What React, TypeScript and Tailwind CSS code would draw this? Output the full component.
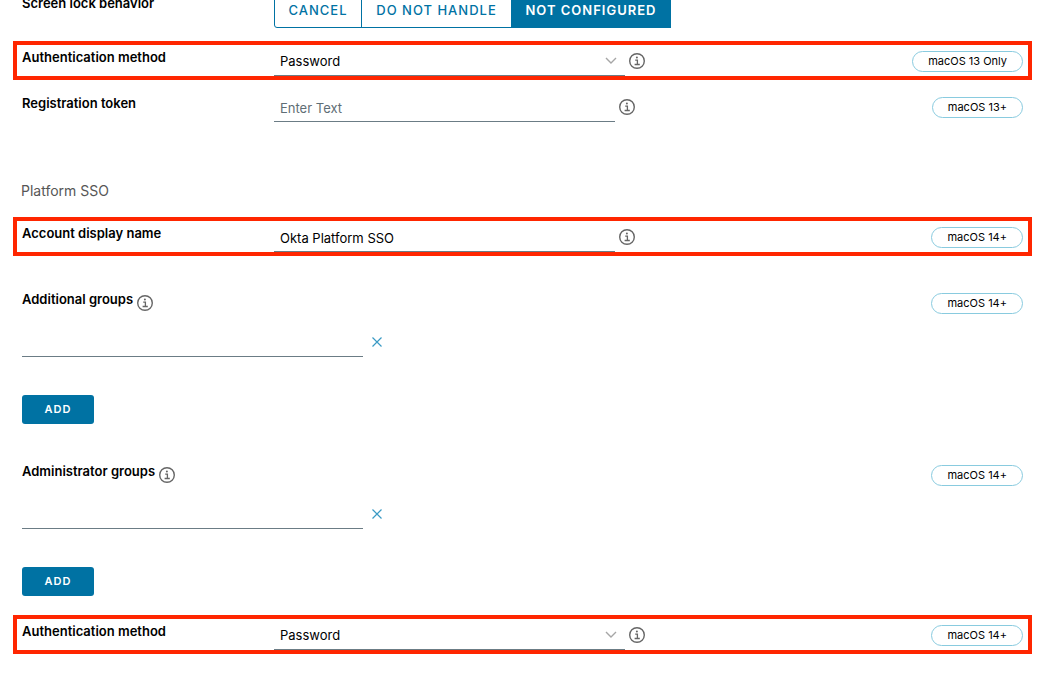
import React, { useState } from 'react';

const InfoIcon: React.FC = () => (
  <svg
    className="w-4 h-4 mt-2 ml-1 shrink-0 text-[#666666]"
    viewBox="0 0 16 16"
    fill="none"
    stroke="currentColor"
    aria-hidden="true"
  >
    <circle cx="8" cy="8" r="7.3" strokeWidth="1.4" />
    <circle cx="7.9" cy="4.6" r="1" fill="currentColor" stroke="none" />
    <path d="M6.2 7.1H8.4V11.4M5.6 11.5H10.8" strokeWidth="1.3" />
  </svg>
);

const Badge: React.FC<{ children: React.ReactNode }> = ({ children }) => (
  <span className="ml-auto mt-[6px] h-[21px] shrink-0 px-[15px] flex items-center rounded-full border border-[#89cbdf] text-[11px] whitespace-nowrap">
    {children}
  </span>
);

interface RowProps {
  label: string;
  htmlFor: string;
  badge: string;
  highlight?: boolean;
  children: React.ReactNode;
}

const Row: React.FC<RowProps> = ({ label, htmlFor, badge, highlight, children }) => (
  <div
    className={`flex items-start border-4 px-[5px] ${
      highlight ? 'border-[#ff2600]' : 'border-transparent'
    }`}
  >
    <label htmlFor={htmlFor} className="w-[252px] shrink-0 pt-1 text-[13px] leading-4 font-semibold">
      {label}
    </label>
    {children}
    <Badge>{badge}</Badge>
  </div>
);

const SelectField: React.FC<{ id: string }> = ({ id }) => (
  <>
    <div className="relative w-[351px]">
      <select
        id={id}
        className="block w-full h-[31px] pt-[3px] pl-[6px] pr-6 appearance-none bg-transparent border-b border-[#6b7c85] text-[13px] outline-none"
      >
        <option>Password</option>
      </select>
      <svg
        className="absolute right-2 top-3 w-3 h-[7px] text-[#a6a6a6] pointer-events-none"
        viewBox="0 0 12 7"
        fill="none"
        stroke="currentColor"
      >
        <path d="M1 1L6 6L11 1" strokeWidth="1.4" />
      </svg>
    </div>
    <InfoIcon />
  </>
);

interface TextFieldProps {
  id: string;
  placeholder?: string;
  defaultValue?: string;
}

const TextField: React.FC<TextFieldProps> = ({ id, placeholder, defaultValue }) => (
  <>
    <input
      id={id}
      type="text"
      placeholder={placeholder}
      defaultValue={defaultValue}
      className="w-[341px] h-[31px] pt-[3px] pl-[6px] border-b border-[#6b7c85] text-[13px] outline-none placeholder:text-[#5f6e76]"
    />
    <InfoIcon />
  </>
);

const GroupList: React.FC<{ id: string; label: string }> = ({ id, label }) => (
  <>
    <div className="flex items-start h-[39px] border-4 border-transparent px-[5px]">
      <label htmlFor={id} className="pt-1 text-[13px] leading-4 font-semibold">
        {label}
      </label>
      <InfoIcon />
      <Badge>macOS 14+</Badge>
    </div>
    <div className="mt-1 px-[9px] flex items-center">
      <input
        id={id}
        type="text"
        className="w-[341px] h-[31px] pl-[6px] border-b border-[#6b7c85] text-[13px] outline-none"
      />
      <button type="button" aria-label="Remove" className="ml-2 p-[1px] text-[#3a9ac4]">
        <svg className="w-[10px] h-[10px]" viewBox="0 0 10 10" fill="none" stroke="currentColor">
          <path d="M0.5 0.5L9.5 9.5M9.5 0.5L0.5 9.5" strokeWidth="1.2" />
        </svg>
      </button>
    </div>
    <button
      type="button"
      className="block mt-[38px] ml-[9px] w-[72px] h-[29px] rounded-[3px] bg-[#0072a3] text-white text-[11px] font-semibold tracking-[1px]"
    >
      ADD
    </button>
  </>
);

const behaviors = [
  { name: 'CANCEL', size: 'w-[88px] rounded-l-[3px]' },
  { name: 'DO NOT HANDLE', size: 'w-[151px] -ml-px' },
  { name: 'NOT CONFIGURED', size: 'w-[160px] -ml-px' },
];

const App: React.FC = () => {
  const [behavior, setBehavior] = useState('NOT CONFIGURED');

  return (
    <div className="overflow-hidden bg-white text-black font-['Inter','Liberation_Sans',sans-serif]">
      <form className="-mt-2 ml-[13px] mr-[19px]" onSubmit={(e) => e.preventDefault()}>
        <div className="flex items-start px-[9px]">
          <span id="lock-behavior" className="w-[252px] shrink-0 pt-[3px] text-[13px] leading-4 font-semibold">
            Screen lock behavior
          </span>
          <div role="group" aria-labelledby="lock-behavior" className="mt-[2px] flex">
            {behaviors.map(({ name, size }) => (
              <button
                key={name}
                type="button"
                aria-pressed={behavior === name}
                onClick={() => setBehavior(name)}
                className={`h-[34px] border border-[#0072a3] text-[13px] tracking-[1px] whitespace-nowrap ${size} ${
                  behavior === name ? 'bg-[#0072a3] text-white font-semibold' : 'text-[#0072a3] font-medium'
                }`}
              >
                {name}
              </button>
            ))}
          </div>
        </div>

        <div className="mt-[13px]">
          <Row label="Authentication method" htmlFor="auth-13" badge="macOS 13 Only" highlight>
            <SelectField id="auth-13" />
          </Row>
        </div>
        <div className="mt-[7px]">
          <Row label="Registration token" htmlFor="token" badge="macOS 13+">
            <TextField id="token" placeholder="Enter Text" />
          </Row>
        </div>

        {/* Platform SSO */}
        <h2 className="mt-[55px] mb-4 pl-2 text-[14px] leading-5 text-[#565656]">Platform SSO</h2>
        <Row label="Account display name" htmlFor="account-name" badge="macOS 14+" highlight>
          <TextField id="account-name" defaultValue="Okta Platform SSO" />
        </Row>

        <div className="mt-[27px]">
          <GroupList id="additional-groups" label="Additional groups" />
        </div>
        <div className="mt-[31px]">
          <GroupList id="admin-groups" label="Administrator groups" />
        </div>

        <div className="mt-[19px] mb-10">
          <Row label="Authentication method" htmlFor="auth-14" badge="macOS 14+" highlight>
            <SelectField id="auth-14" />
          </Row>
        </div>
      </form>
    </div>
  );
};

export default App;
